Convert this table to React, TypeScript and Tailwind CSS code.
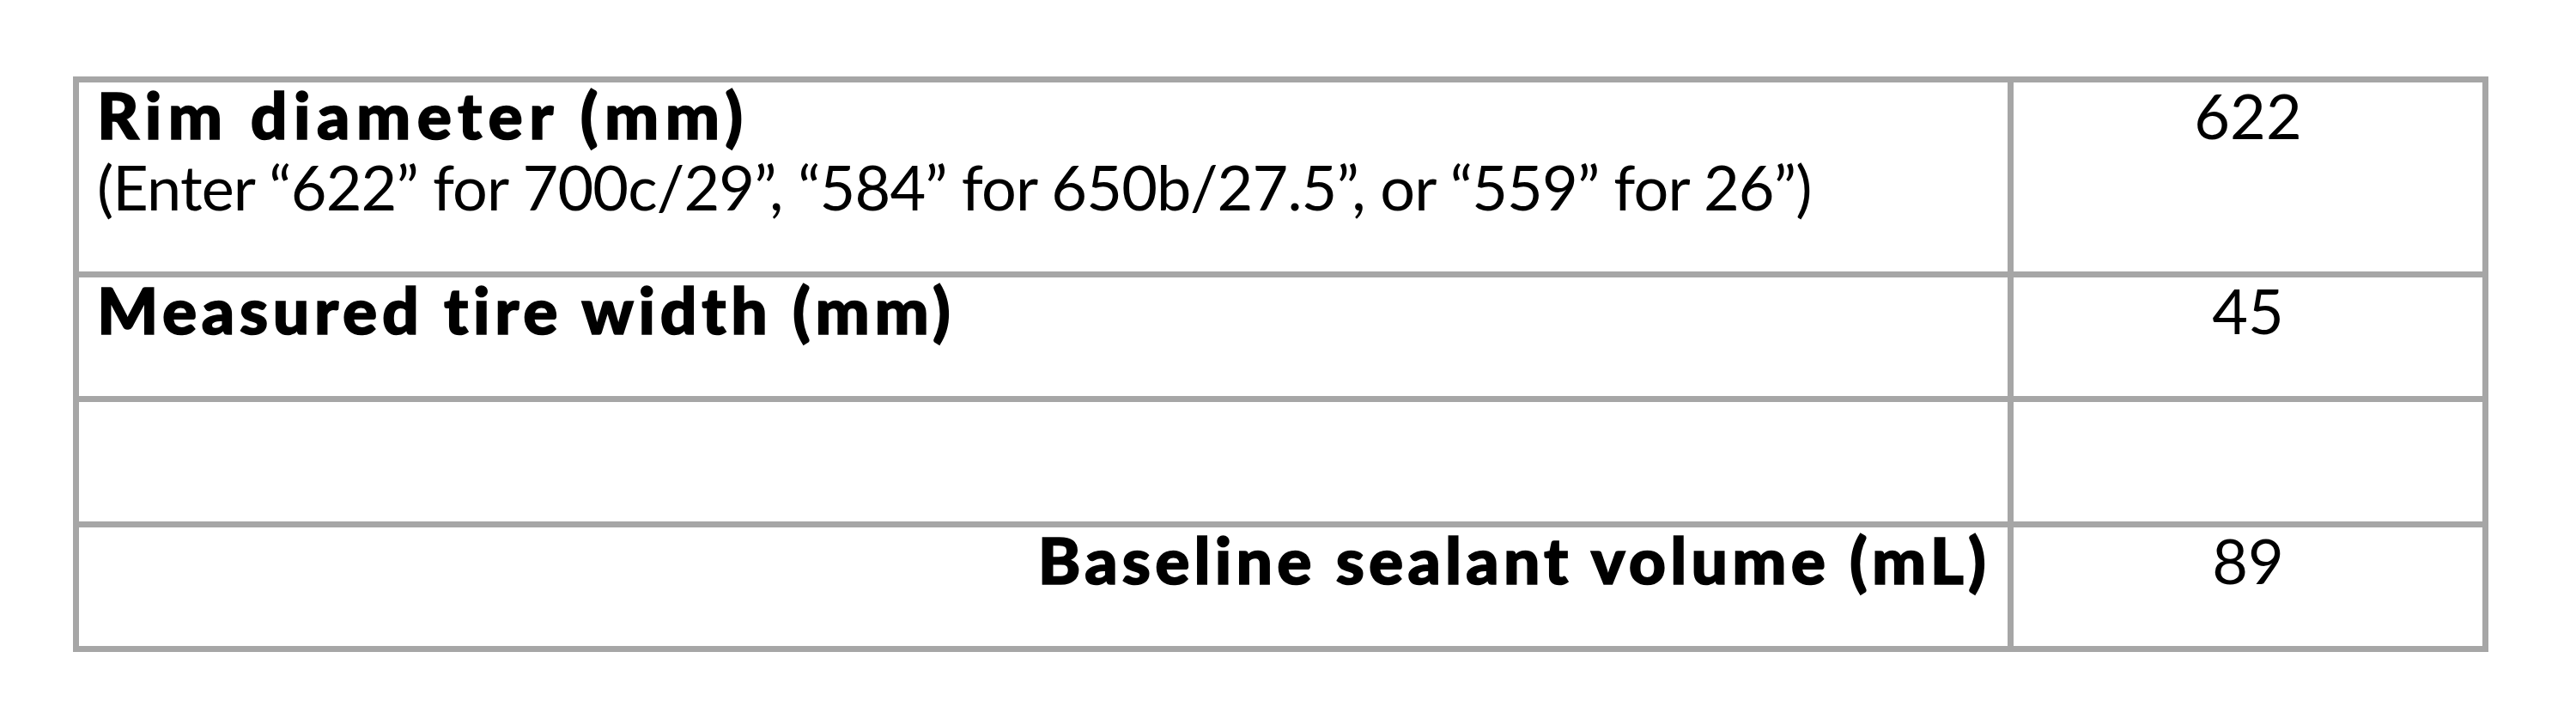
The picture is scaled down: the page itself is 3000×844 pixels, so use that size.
import React from 'react';

const font = { fontFamily: 'Lato, "Liberation Sans", sans-serif' };

interface RowProps {
  readonly height: string;
  readonly value?: string;
  readonly children?: React.ReactNode;
  readonly align?: 'left' | 'right';
  readonly last?: boolean;
}

const Row: React.FC<RowProps> = ({ height, value, children, align = 'left', last = false }) => {
  return (
    <div className={`flex ${height} ${last ? '' : 'border-b-[7px] border-[#a6a6a6]'}`}>
      <div
        className={`w-[2253px] flex-none border-r-[7px] border-[#a6a6a6] px-[21px] ${
          align === 'right' ? 'text-right pr-[20px]' : 'text-left'
        }`}
      >
        <div className="-mt-[5px]">{children}</div>
      </div>
      <div className="flex-1 text-center">
        <div className="-mt-[4px]">{value}</div>
      </div>
    </div>
  );
};

interface LabelProps {
  readonly children: React.ReactNode;
  readonly tracking: string;
}

const Label: React.FC<LabelProps> = ({ children, tracking }) => (
  <div className={`text-[75px] font-black ${tracking} [-webkit-text-stroke:1.6px_black]`}>
    {children}
  </div>
);

export default function App() {
  return (
    <div className="min-h-screen w-full bg-white pt-[89px] pl-[85px] text-black" style={font}>
      <div className="w-[2813px] border-[7px] border-[#a6a6a6] text-[72px] leading-[84px]">
        {/* Rim diameter */}
        <Row height="h-[227px]" value="622">
          <Label tracking="tracking-[7.5px]">Rim diameter (mm)</Label>
          <div className="tracking-[-0.85px]">
            (Enter “622” for 700c/29”, “584” for 650b/27.5”, or “559” for 26”)
          </div>
        </Row>

        {/* Tire width */}
        <Row height="h-[145px]" value="45">
          <Label tracking="tracking-[5.7px]">Measured tire width (mm)</Label>
        </Row>

        {/* Empty spacer row */}
        <Row height="h-[146px]" />

        {/* Result */}
        <Row height="h-[138px]" value="89" align="right" last>
          <Label tracking="tracking-[5.2px]">Baseline sealant volume (mL)</Label>
        </Row>
      </div>
    </div>
  );
}
